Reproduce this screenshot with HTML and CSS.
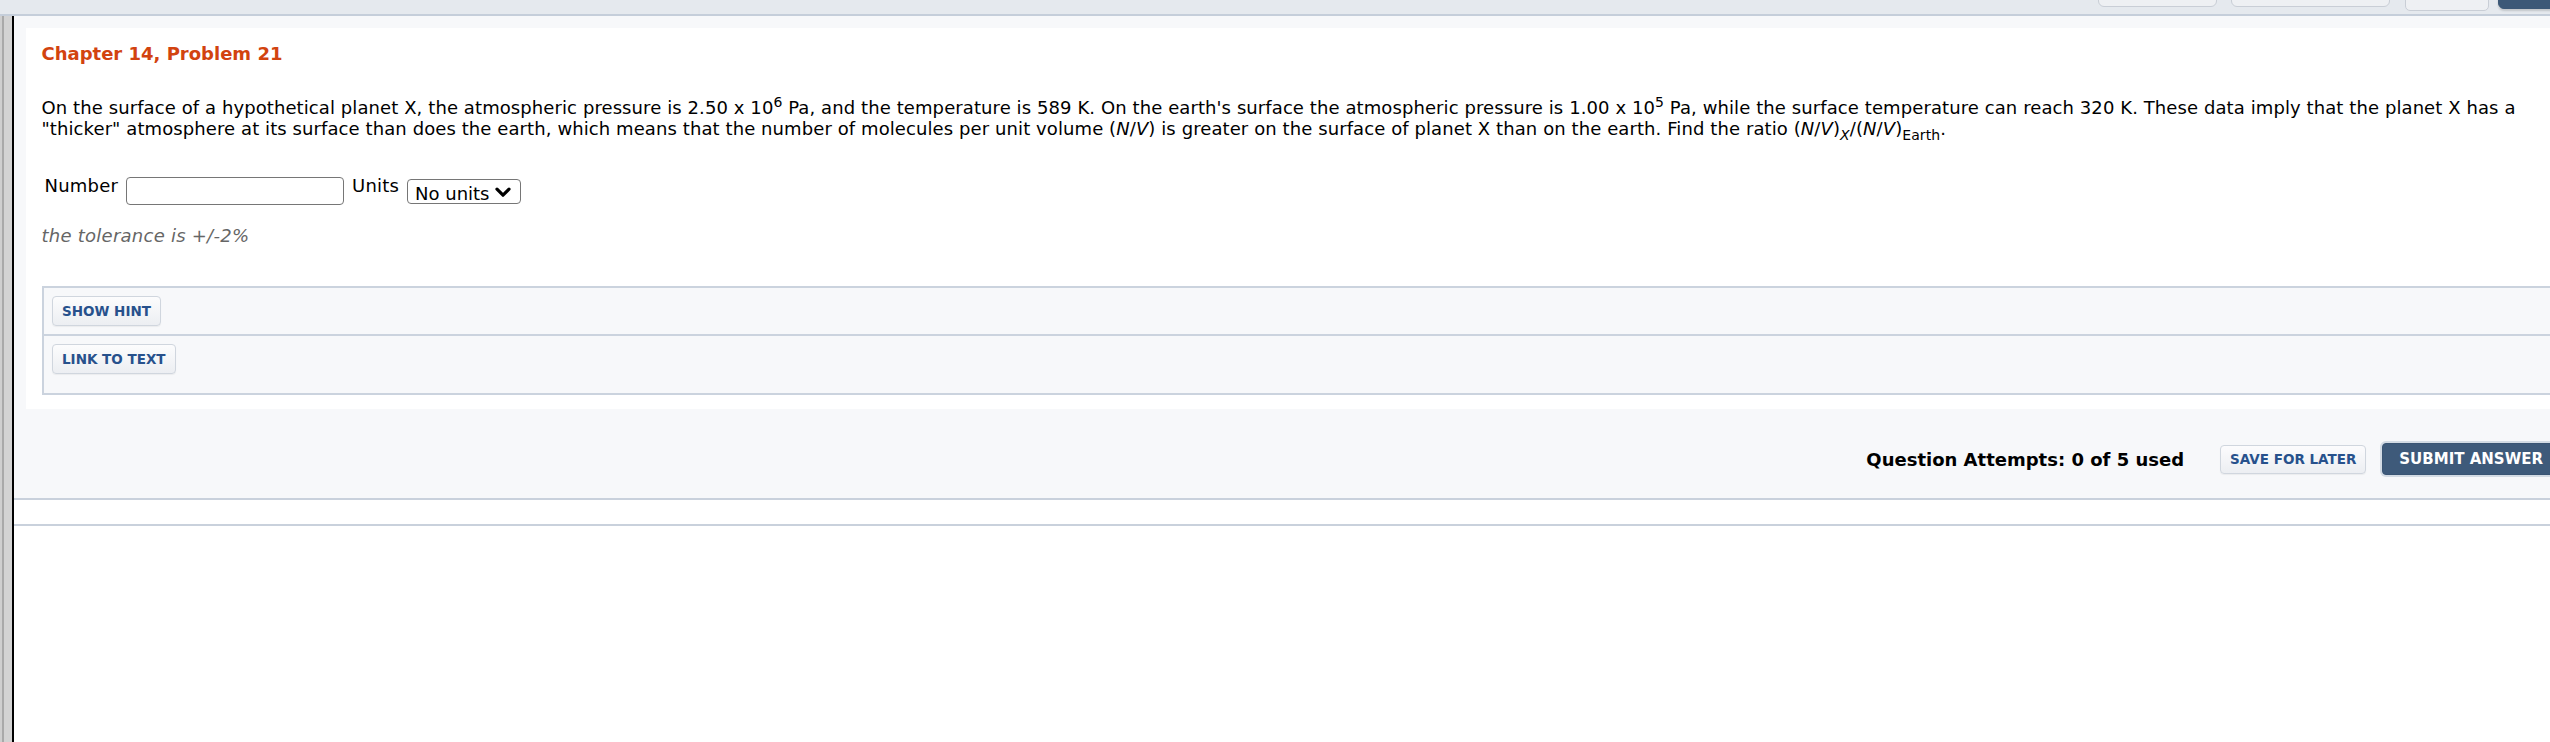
FILE: index.html
```html
<!DOCTYPE html>
<html lang="en">
<head>
<meta charset="utf-8">
<title>Chapter 14, Problem 21</title>
<link rel="stylesheet" href="styles.css">
</head>
<body>
<div class="page">
  <header class="topbar">
    <span class="tb-btn tb-a"></span>
    <span class="tb-btn tb-b"></span>
    <span class="tb-btn tb-c"></span>
    <span class="tb-btn tb-dark"></span>
  </header>
  <div class="main">
    <div class="rail"></div>
    <div class="content">
      <div class="stage">
        <section class="panel">
          <h2 class="title">Chapter 14, Problem 21</h2>
          <p class="question">On the surface of a hypothetical planet X, the atmospheric pressure is 2.50 x 10<sup>6</sup> Pa, and the temperature is 589 K. On the earth's surface the atmospheric pressure is 1.00 x 10<sup>5</sup> Pa, while the surface temperature can reach 320 K. These data imply that the planet X has a "thicker" atmosphere at its surface than does the earth, which means that the number of molecules per unit volume (<i>N</i>/<i>V</i>) is greater on the surface of planet X than on the earth. Find the ratio (<i>N</i>/<i>V</i>)<sub><i>X</i></sub>/(<i>N</i>/<i>V</i>)<sub>Earth</sub>.</p>
          <div class="answer-row">
            <span class="label">Number</span>
            <input class="num-input" type="text" aria-label="Number">
            <span class="label units">Units</span>
            <div class="select">
              <span class="select-text">No units</span>
              <svg class="chevron" width="16" height="11" viewBox="0 0 16 11"><path d="M2 2.2 L8 8.2 L14 2.2" fill="none" stroke="#000" stroke-width="3.2" stroke-linecap="round" stroke-linejoin="round"/></svg>
            </div>
          </div>
          <p class="tolerance">the tolerance is +/-2%</p>
          <div class="hint-box">
            <div class="hint-row"><button class="btn">SHOW HINT</button></div>
            <div class="hint-row last"><button class="btn">LINK TO TEXT</button></div>
          </div>
        </section>
        <footer class="attempts">
          <span class="attempts-text">Question Attempts: 0 of 5 used</span>
          <button class="btn save">SAVE FOR LATER</button>
          <button class="btn submit">SUBMIT ANSWER</button>
        </footer>
      </div>
      <div class="band"></div>
    </div>
  </div>
</div>
</body>
</html>
```

FILE: styles.css
```css
html, body {
  margin: 0;
  padding: 0;
  overflow: hidden;
  background: #fff;
}
body {
  font-family: "DejaVu Sans", Verdana, sans-serif;
  font-size: 18px;
  line-height: 21px;
  color: #000;
}
.page {
  width: 2590px;
}

/* top toolbar (mostly scrolled out of view) */
.topbar {
  height: 14px;
  background: #e5e9ee;
  border-bottom: 2px solid #c5ceda;
  display: flex;
  justify-content: flex-end;
  align-items: flex-end;
  overflow: hidden;
  padding-right: 2px;
}
.tb-btn {
  display: block;
  height: 30px;
  flex: none;
  box-sizing: border-box;
  border: 1px solid #c9ced6;
  border-radius: 6px;
  background: #eef0f3;
}
.tb-a { width: 119px; margin-bottom: 7px; }
.tb-b { width: 159px; margin-left: 14px; margin-bottom: 7px; }
.tb-c { width: 84px; margin-left: 15px; margin-bottom: 3px; border-radius: 5px; }
.tb-dark {
  width: 90px;
  margin-left: 9px;
  margin-bottom: 5px;
  background: #3c5877;
  border-color: #3c5877;
  box-shadow: 0 2px 2px rgba(0,0,0,0.15);
}

/* main area */
.main {
  display: flex;
  min-height: calc(100vh - 16px);
}
.rail {
  width: 12px;
  flex: none;
  border-right: 2px solid #000;
  background: linear-gradient(to right, #cfcfcf 0 2px, #a9a9a9 2px 4px, #d3d3d3 4px 12px);
}
.content {
  flex: 1;
}
.stage {
  background: #f7f8fa;
  padding-top: 12px;
  border-bottom: 2px solid #c9d1dc;
}
.panel {
  background: #fff;
  margin-left: 12px;
  padding: 15px 16px 14px 15.5px;
}
.title {
  margin: 0 0 33px;
  font-size: 18px;
  line-height: 21px;
  font-weight: 700;
  color: #d2430f;
}
.question {
  margin: 0;
  letter-spacing: 0.09px;
}
.question sup,
.question sub {
  font-size: 14px;
  line-height: 0;
}
.question sub {
  vertical-align: -5px;
}
.question sup {
  vertical-align: 7px;
}

.answer-row {
  display: flex;
  align-items: flex-start;
  margin-top: 38px;
  height: 28px;
}
.label {
  margin-top: -2px;
  padding-left: 3px;
  letter-spacing: 0.2px;
}
.units {
  padding-left: 0;
  margin-left: 8px;
}
.num-input {
  box-sizing: border-box;
  width: 218px;
  height: 28px;
  margin: 0 0 0 8px;
  border: 1px solid #767676;
  border-radius: 4px;
  background: #fff;
  font: inherit;
  padding: 0 4px;
}
.select {
  box-sizing: border-box;
  width: 114px;
  height: 25px;
  margin: 2px 0 0 8px;
  border: 1px solid #767676;
  border-radius: 4px;
  background: #fff;
  display: flex;
  align-items: flex-start;
  padding: 3px 0 0 7px;
}
.select-text {
  line-height: 21px;
}
.chevron {
  margin: 4px 0 0 5px;
}

.tolerance {
  margin: 20px 0 0;
  font-style: italic;
  color: #666;
  letter-spacing: 0.25px;
}

.hint-box {
  margin-top: 40px;
  border: 2px solid #cbd3de;
  background: #f7f8fa;
  padding-bottom: 11px;
}
.hint-row {
  padding: 8px 8.5px;
  border-bottom: 2px solid #cbd3de;
}
.hint-row.last {
  border-bottom: 0;
}

.btn {
  display: inline-flex;
  align-items: center;
  box-sizing: border-box;
  height: 30px;
  padding: 0 9px;
  margin: 0;
  font-family: "DejaVu Sans", Verdana, sans-serif;
  font-size: 13.5px;
  font-weight: 700;
  color: #27518c;
  background: linear-gradient(#fcfcfd, #eceef2);
  border: 1px solid #d0d6de;
  border-radius: 4px;
  box-shadow: 0 1px 1px rgba(0,0,0,0.05);
}

.attempts {
  display: flex;
  justify-content: flex-end;
  align-items: center;
  padding: 34px 30px 23px 0;
  height: 32px;
}
.attempts-text {
  font-weight: 700;
  margin-right: 36px;
}
.save {
  height: 29px;
}
.submit {
  height: 32px;
  margin-left: 16px;
  padding: 0 16px;
  font-size: 15px;
  color: #fff;
  background: #3e5a7a;
  border: 1px solid #3a5574;
  box-shadow: 0 0 0 2px #d3dbe4;
}

.band {
  height: 24px;
  border-bottom: 2px solid #c9d1dc;
}
```
